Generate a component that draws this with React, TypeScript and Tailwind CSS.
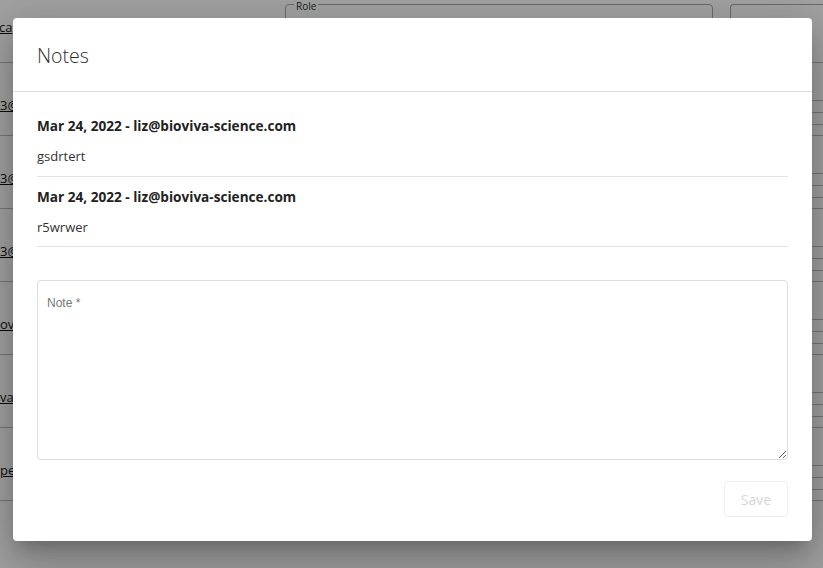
import React from "react";

const notes = [
  { date: "Mar 24, 2022", author: "liz@bioviva-science.com", text: "gsdrtert" },
  { date: "Mar 24, 2022", author: "liz@bioviva-science.com", text: "r5wrwer" },
];

const rows = ["3@", "3@", "3@", "ovi", "va-", "per", ""];

function BackgroundPage() {
  return (
    <div className="h-[568px] w-full overflow-hidden bg-white [font-family:'Open_Sans',sans-serif]">
      {/* header strip with filters */}
      <div className="flex h-[63px] border-b border-[#bbb]">
        <div className="flex w-[60px] items-center pb-[6px] text-[13px] text-[#111] underline">
          <span className="-ml-[1px]">ca</span>
        </div>
        <div className="w-[225px]" />
        <div className="relative mt-[4px] h-[80px] w-[428px] rounded border border-[#aaa]">
          <span className="absolute left-[8px] -top-[4px] bg-white px-[2px] text-[10px] leading-[10px] text-[#333]">Role</span>
        </div>
        <div className="ml-[17px] mt-[4px] h-[80px] flex-1 rounded-tl border-l border-t border-[#aaa]" />
      </div>
      {rows.map((r, i) => (
        <div key={i} className="flex h-[73px] border-b border-[#bbb]">
          <div className="flex w-[60px] items-center pt-[14px] text-[13px] text-[#111] underline">
            <span>{r}</span>
          </div>
          <div className="flex-1" />
          {r && (
            <div className="flex w-[60px] flex-col justify-end pb-[10px]">
              <div className="h-[12px] border-t border-[#bbb]" />
              <div className="h-[12px] border-t border-[#bbb]" />
              <div className="border-t border-[#bbb]" />
            </div>
          )}
        </div>
      ))}
    </div>
  );
}

export default function App() {
  return (
    <div className="relative h-[568px] w-[823px] overflow-hidden [font-family:'Open_Sans','Noto_Sans',sans-serif]">
      <BackgroundPage />

      {/* Backdrop */}
      <div className="absolute inset-0 bg-black/[0.37]" />

      {/* Dialog */}
      <div className="absolute left-[13px] top-[18px] flex h-[523px] w-[799px] flex-col rounded bg-white shadow-[0_11px_15px_-7px_rgba(0,0,0,0.2),0_24px_38px_3px_rgba(0,0,0,0.14),0_9px_46px_8px_rgba(0,0,0,0.12)]">
        <div className="h-[74px] border-b border-[#ddd] px-6 pt-[24px]">
          <h2 className="text-[19.5px] leading-[28px] font-light text-[#2e2e2e]">Notes</h2>
        </div>

        <div className="flex flex-1 flex-col px-6 pt-[24px]">
          {notes.map((n, i) => (
            <div key={i} className={`border-b border-[#e3e3e3] ${i > 0 ? "pt-[10px] pb-[9px]" : "pb-[10px]"}`}>
              <div className="text-[13.6px] leading-[20px] font-bold text-[#222]">
                {n.date} - {n.author}
              </div>
              <div className="mt-[10px] text-[13px] leading-[20px] text-[#333]">{n.text}</div>
            </div>
          ))}

          <div className="mt-[33px] h-[180px] rounded border border-[#ddd]">
            <textarea
              placeholder="Note *"
              className="h-full w-full resize-y rounded px-[9px] pt-[14px] text-[12px] leading-[16px] text-[#333] outline-none placeholder:text-[#777] [font-family:'Liberation_Sans',Arial,sans-serif]"
            />
          </div>

          <div className="mt-[21px] flex justify-end">
            <button
              disabled
              className="h-[36px] w-[64px] rounded border border-[#eee] bg-white text-[14px] text-[#d6d6d6]"
            >
              Save
            </button>
          </div>
        </div>
      </div>
    </div>
  );
}
